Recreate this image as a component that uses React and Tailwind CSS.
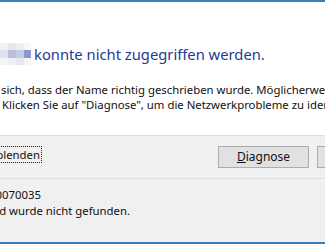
export default function App() {
  const font = { fontFamily: '"Noto Sans", "Open Sans", sans-serif' };
  return (
    <div className="w-[325px] h-[244px] overflow-hidden flex flex-col bg-white text-[11.35px] text-[#111]" style={font}>
      {/* Fensterrahmen oben */}
      <div className="h-[2px] bg-[#3a7fc0] shrink-0" />

      {/* Inhaltsbereich */}
      <div className="h-[133px] shrink-0 bg-white pt-[40px]">
        <div className="flex items-center h-[24px] whitespace-nowrap">
          {/* verpixelter Name */}
          <div className="flex flex-col w-[31px] h-[22px] shrink-0">
            <div className="flex h-[7px]">
              <div className="w-[8px] bg-[#f1f2f6]" />
              <div className="w-[8px] bg-[#e4e7f0]" />
              <div className="w-[8px] bg-[#eceef5]" />
              <div className="w-[7px] bg-[#f6f7fa]" />
            </div>
            <div className="flex h-[8px]">
              <div className="w-[8px] bg-[#dfe3ee]" />
              <div className="w-[8px] bg-[#b7c0dc]" />
              <div className="w-[8px] bg-[#c7cee4]" />
              <div className="w-[7px] bg-[#8d9ac8]" />
            </div>
            <div className="flex h-[7px]">
              <div className="w-[8px] bg-[#f3f4f8]" />
              <div className="w-[8px] bg-[#eef0f6]" />
              <div className="w-[8px] bg-[#e6e9f2]" />
              <div className="w-[7px] bg-[#f4f5f9]" />
            </div>
          </div>
          <span className="ml-[3px] text-[14.75px] text-[#1f3b94] leading-none">konnte nicht zugegriffen werden.</span>
        </div>
        <div className="mt-[16px] leading-[15px] whitespace-nowrap pl-[1px]">
          <div>sich, dass der Name richtig geschrieben wurde. Möglicherweise</div>
          <div className="pl-[1px]">Klicken Sie auf "Diagnose", um die Netzwerkprobleme zu identifizieren.</div>
        </div>
      </div>

      <div className="h-px bg-[#dfdfdf] shrink-0" />

      {/* Schaltflächenleiste */}
      <div className="h-[42px] shrink-0 bg-[#f0f0f0] flex items-center whitespace-nowrap">
        <div className="w-[42px] flex justify-end mb-[6px]">
          <div className="shrink-0 border border-dotted border-[#222] px-[1px] leading-[15px]">Details einblenden</div>
        </div>
        <div className="ml-auto flex gap-[8px] -mr-[4px]">
          <button className="w-[91px] h-[22px] bg-[#e1e1e1] border border-[#adadad] text-[12px] leading-none">
            <span className="underline">D</span>iagnose
          </button>
          <button className="w-[12px] h-[22px] bg-[#e1e1e1] border border-[#adadad]" />
        </div>
      </div>

      <div className="h-px bg-[#dfdfdf] shrink-0" />

      {/* Details */}
      <div className="flex-1 bg-[#f0f0f0] pt-[8px] leading-[16px] whitespace-nowrap">
        <div className="w-[41px] flex justify-end">
          <span className="shrink-0">Fehlercode: 0x80070035</span>
        </div>
        <div className="w-[130px] flex justify-end">
          <span className="shrink-0">Der Netzwerkpfad wurde nicht gefunden.</span>
        </div>
      </div>

      <div className="h-[2px] bg-[#3a7fc0] shrink-0" />
    </div>
  );
}
